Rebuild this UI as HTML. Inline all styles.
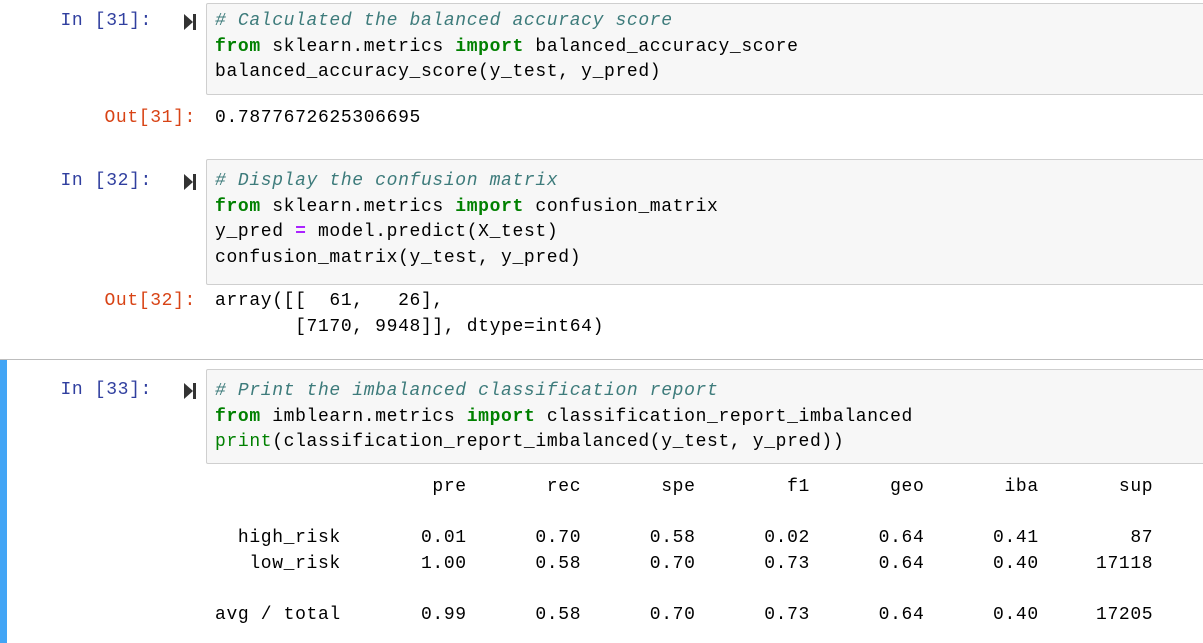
<!DOCTYPE html>
<html><head><style>
body{margin:0;width:1203px;height:643px;background:#fff;position:relative;overflow:hidden;font-family:"Liberation Mono",monospace;font-size:18px;letter-spacing:0.64px}
.a{position:absolute;white-space:pre;line-height:25.5px}
.box{position:absolute;left:206px;width:1000px;background:#f7f7f7;border:1px solid #cfcfcf;border-radius:2px;box-sizing:border-box;padding:5px 0 0 8px}
.in{color:#303F9F;text-align:right;width:152px;left:0}
.out{color:#D84315;text-align:right;width:196px;left:0}
.c{color:#3D7B7B;font-style:italic}
.k{color:#008000;font-weight:bold}
.b{color:#008000}
.o{color:#AA22FF;font-weight:bold}
.run{position:absolute;left:184px;width:12px;height:16px}
</style></head><body>
<div class="a in" style="top:9px">In [31]:</div>
<svg class="run" style="top:14px" viewBox="0 0 12 16"><path d="M0 0L9 8L0 16Z" fill="#333"/><rect x="9" y="0" width="3" height="16" fill="#333"/></svg>
<div class="box" style="top:3px;height:92px"><div class="a" style="position:static"><span class="c"># Calculated the balanced accuracy score</span>
<span class="k">from</span> sklearn.metrics <span class="k">import</span> balanced_accuracy_score
balanced_accuracy_score(y_test, y_pred)</div></div>
<div class="a out" style="top:106px">Out[31]:</div>
<div class="a" style="left:215px;top:106px">0.7877672625306695</div>

<div class="a in" style="top:169px">In [32]:</div>
<svg class="run" style="top:174px" viewBox="0 0 12 16"><path d="M0 0L9 8L0 16Z" fill="#333"/><rect x="9" y="0" width="3" height="16" fill="#333"/></svg>
<div class="box" style="top:159px;height:126px"><div class="a" style="position:static;margin-top:4px"><span class="c"># Display the confusion matrix</span>
<span class="k">from</span> sklearn.metrics <span class="k">import</span> confusion_matrix
y_pred <span class="o">=</span> model.predict(X_test)
confusion_matrix(y_test, y_pred)</div></div>
<div class="a out" style="top:289px">Out[32]:</div>
<div class="a" style="left:215px;top:289px">array([[  61,   26],
       [7170, 9948]], dtype=int64)</div>

<div style="position:absolute;left:0;top:359px;width:1203px;height:1px;background:#bdbdbd"></div>
<div style="position:absolute;left:0;top:360px;width:7px;height:283px;background:#42A5F5"></div>
<div class="a in" style="top:378px">In [33]:</div>
<svg class="run" style="top:383px" viewBox="0 0 12 16"><path d="M0 0L9 8L0 16Z" fill="#333"/><rect x="9" y="0" width="3" height="16" fill="#333"/></svg>
<div class="box" style="top:369px;height:95px"><div class="a" style="position:static;margin-top:4px"><span class="c"># Print the imbalanced classification report</span>
<span class="k">from</span> imblearn.metrics <span class="k">import</span> classification_report_imbalanced
<span class="b">print</span>(classification_report_imbalanced(y_test, y_pred))</div></div>
<div class="a" style="left:215px;top:475px">                   pre       rec       spe        f1       geo       iba       sup

  high_risk       0.01      0.70      0.58      0.02      0.64      0.41        87
   low_risk       1.00      0.58      0.70      0.73      0.64      0.40     17118

avg / total       0.99      0.58      0.70      0.73      0.64      0.40     17205</div>
</body></html>
